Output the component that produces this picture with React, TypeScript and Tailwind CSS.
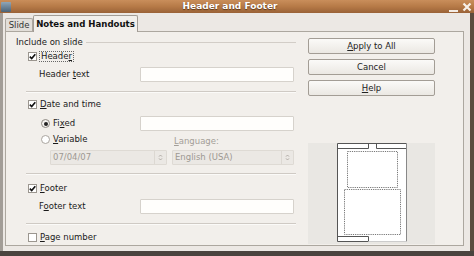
import React from "react";

function Check({ checked }: { checked: boolean }) {
  return (
    <div className="w-[9px] h-[9px] border border-[#9b968f] bg-white flex items-center justify-center shrink-0">
      {checked && (
        <svg width="7" height="7" viewBox="0 0 7 7">
          <path d="M0.8 3.6 L2.7 5.6 L6.3 1.2" stroke="#111" strokeWidth="1.6" fill="none" />
        </svg>
      )}
    </div>
  );
}

function Radio({ on }: { on: boolean }) {
  return (
    <div
      className={
        "w-[9px] h-[9px] rounded-full border flex items-center justify-center shrink-0 " +
        (on ? "border-[#8e8983] bg-[#f4f2ef]" : "border-[#aaa59f] bg-white")
      }
    >
      {on && <div className="w-[4px] h-[4px] rounded-full bg-[#222]" />}
    </div>
  );
}

function Input() {
  return <div className="w-[154px] h-[15px] border border-[#d6d2cc] bg-[#fffefc] rounded-[1px]" />;
}

function Sep() {
  return <div className="ml-[10px] w-[270px] border-t border-t-[#cfcac4] border-b border-b-[#fbfaf8]" />;
}

function Select({ w, text }: { w: string; text: string }) {
  return (
    <div className={w + " h-[15px] flex border border-[#dedad4] bg-[#ebe8e4] rounded-[1px]"}>
      <div className="flex-1 flex items-center pl-[2px] text-[#9d9892] leading-none">{text}</div>
      <div className="w-[12px] border-l border-l-[#dcd8d2] flex items-center justify-center">
        <svg width="5" height="7" viewBox="0 0 5 7">
          <path d="M1 2.6 L2.5 1 L4 2.6 M1 4.4 L2.5 6 L4 4.4" stroke="#aaa59f" strokeWidth="0.9" fill="none" />
        </svg>
      </div>
    </div>
  );
}

function Btn({ children }: { children: React.ReactNode }) {
  return (
    <div className="h-[16px] border border-[#a39d95] rounded-[2px] bg-gradient-to-b from-[#fbfaf8] to-[#ebe8e3] flex items-center justify-center leading-none text-[#222]">
      {children}
    </div>
  );
}

function Preview() {
  return (
    <div className="mt-auto mb-[1px] h-[101px] bg-[#e9e7e3] pl-[29px]">
      <svg width="71" height="100" viewBox="0 0 71 100">
        <rect x="0.5" y="0.5" width="69" height="98" fill="#ffffff" />
        <path d="M0.5 0.5 H69.5" stroke="#555" strokeWidth="1" />
        <path d="M0.5 5.5 H31.5 V0.5 M39.5 0.5 V5.5 H69.5" stroke="#555" strokeWidth="1" fill="none" />
        <path d="M0.5 0.5 V98.5" stroke="#555" strokeWidth="1" />
        <path d="M69.5 0.5 V98.5" stroke="#888" strokeWidth="1" />
        <rect x="10.5" y="8.5" width="50" height="36" fill="none" stroke="#777" strokeWidth="1" strokeDasharray="1.2 1" />
        <rect x="7.5" y="46.5" width="56" height="45" fill="none" stroke="#777" strokeWidth="1" strokeDasharray="1.2 1" />
        <path d="M0.5 93.5 H31.5 V98.5" stroke="#555" strokeWidth="1" fill="none" />
        <path d="M0.5 98.5 H31.5" stroke="#555" strokeWidth="1" />
        <path d="M31.5 98.5 H69.5" stroke="#ccc" strokeWidth="1" />
      </svg>
    </div>
  );
}

export default function App() {
  return (
    <div className="w-[474px] h-[256px] overflow-hidden bg-[#4a433e] font-['DejaVu_Sans',sans-serif] text-[8.5px] text-[#1a1a1a]">
      <div className="h-[251px] flex flex-col">
        {/* title bar */}
        <div className="h-[13px] flex items-center bg-gradient-to-b from-[#c98e5b] via-[#b67a47] to-[#9a6237]">
          <div className="ml-[1px] w-[10px] h-[10px] bg-gradient-to-b from-[#8fa6b8] to-[#4d6477] rounded-[1px]" />
          <div className="flex-1 text-center text-white font-bold text-[9px] leading-none [text-shadow:0_1px_1px_#5a3516]">
            Header and Footer
          </div>
          <div className="w-[9px] h-[10px] flex items-end mr-[3px]">
            <div className="w-[9px] h-[2px] bg-[#f4ece4]" />
          </div>
          <div className="w-[11px] h-[11px] mr-[2px] flex items-center justify-center">
            <svg width="10" height="10" viewBox="0 0 10 10">
              <path d="M1.5 1.5 L8.5 8.5 M8.5 1.5 L1.5 8.5" stroke="#f7f1ea" strokeWidth="2.2" />
            </svg>
          </div>
        </div>
        {/* body */}
        <div className="flex-1 bg-[#ece8e4] border-l-[3px] border-l-[#a29d97] border-r-[4px] border-r-[#5b4b3e] pl-[2px] pr-[6px] pt-[2px]">
          {/* tabs */}
          <div className="h-[16px] flex items-end">
            <div className="h-[13px] w-[28px] border border-b-0 border-[#aaa59e] rounded-t-[2px] bg-[#e2ded9] flex items-center justify-center leading-none text-[#333]">
              Slide
            </div>
            <div className="relative z-10 h-[17px] -mb-px w-[105px] border border-b-0 border-[#a29c95] rounded-t-[2px] bg-[#f2efeb] flex items-center justify-center font-bold leading-none text-[8.6px] text-[#111]">
              Notes and Handouts
            </div>
          </div>
          {/* panel */}
          <div className="h-[215px] border border-[#aca79f] bg-[#f2efeb] flex pl-[10px]">
            {/* left column */}
            <div className="w-[280px] pt-[5px] flex flex-col">
              <div className="h-[10px] flex items-center leading-none">
                <span>Include on slide</span>
                <div className="flex-1 ml-[3px] border-t border-t-[#d2cdc7]" />
              </div>
              <div className="mt-[4px] h-[10px] flex items-center pl-[12px] leading-none">
                <Check checked />
                <span className="ml-[2px] px-[1px] h-[11px] flex items-center border border-dotted border-[#666]">
                  Heade<u className="underline-offset-1">r</u>
                </span>
              </div>
              <div className="mt-[6px] h-[15px] flex items-center leading-none">
                <div className="w-[124px] pl-[23px]">
                  Header <u className="underline-offset-1">t</u>ext
                </div>
                <Input />
              </div>
              <div className="mt-[9px]">
                <Sep />
              </div>
              <div className="mt-[6px] h-[10px] flex items-center pl-[12px] leading-none">
                <Check checked />
                <span className="ml-[3px]">
                  <u className="underline-offset-1">D</u>ate and time
                </span>
              </div>
              <div className="mt-[7px] h-[15px] flex items-center leading-none">
                <div className="w-[124px] pl-[25px] flex items-center">
                  <Radio on />
                  <span className="ml-[3px]">
                    Fi<u className="underline-offset-1">x</u>ed
                  </span>
                </div>
                <Input />
              </div>
              <div className="mt-[3px] h-[10px] flex items-center leading-none">
                <div className="w-[158px] pl-[25px] flex items-center">
                  <Radio on={false} />
                  <span className="ml-[3px]">
                    <u className="underline-offset-1">V</u>ariable
                  </span>
                </div>
                <span className="mt-[4px] text-[#a39e98]">
                  <u className="underline-offset-1">L</u>anguage:
                </span>
              </div>
              <div className="mt-[6px] h-[15px] flex items-center pl-[34px] gap-[5px]">
                <Select w="w-[117px]" text="07/04/07" />
                <Select w="w-[122px]" text="English (USA)" />
              </div>
              <div className="mt-[8px]">
                <Sep />
              </div>
              <div className="mt-[8px] h-[10px] flex items-center pl-[12px] leading-none">
                <Check checked />
                <span className="ml-[3px]">
                  <u className="underline-offset-1">F</u>ooter
                </span>
              </div>
              <div className="mt-[6px] h-[15px] flex items-center leading-none">
                <div className="w-[124px] pl-[23px]">
                  F<u className="underline-offset-1">o</u>oter text
                </div>
                <Input />
              </div>
              <div className="mt-[9px]">
                <Sep />
              </div>
              <div className="mt-[7px] h-[10px] flex items-center pl-[12px] leading-none">
                <Check checked={false} />
                <span className="ml-[3px]">
                  <u className="underline-offset-1">P</u>age number
                </span>
              </div>
            </div>
            {/* right column */}
            <div className="ml-[12px] w-[127px] pt-[6px] flex flex-col">
              <div className="flex flex-col gap-[5px]">
                <Btn>
                  <span>
                    <u className="underline-offset-1">A</u>pply to All
                  </span>
                </Btn>
                <Btn>Cancel</Btn>
                <Btn>
                  <span>
                    <u className="underline-offset-1">H</u>elp
                  </span>
                </Btn>
              </div>
              <Preview />
            </div>
          </div>
        </div>
      </div>
    </div>
  );
}
